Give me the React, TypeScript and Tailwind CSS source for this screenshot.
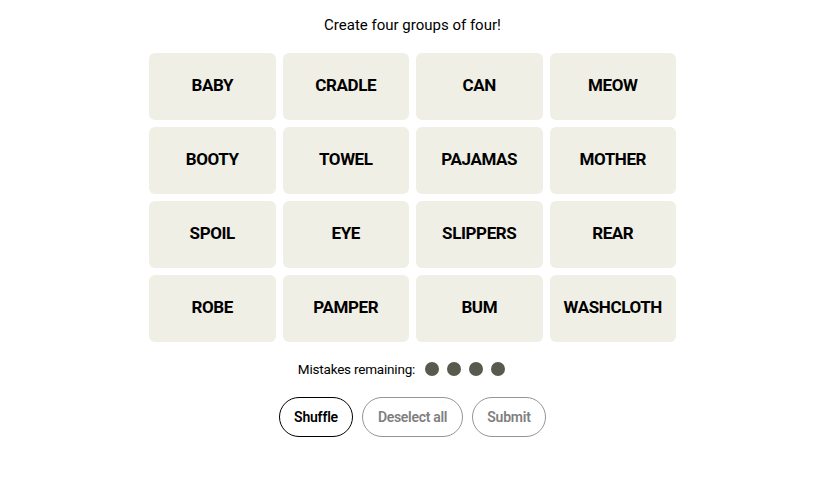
import React from "react";

const words = [
  "BABY", "CRADLE", "CAN", "MEOW",
  "BOOTY", "TOWEL", "PAJAMAS", "MOTHER",
  "SPOIL", "EYE", "SLIPPERS", "REAR",
  "ROBE", "PAMPER", "BUM", "WASHCLOTH",
];

const App = () => {
  return (
    <div className="w-[825px] h-[488px] bg-white flex flex-col items-center font-['Roboto','Liberation_Sans',Arial,sans-serif] text-black">
      <p className="mt-[15px] h-[20px] text-[15px] leading-[20px]">Create four groups of four!</p>

      <div className="mt-[18px] w-[527px] grid grid-cols-4 gap-x-[7px] gap-y-[7px]">
        {words.map((w) => (
          <div
            key={w}
            className="h-[67px] rounded-[6px] bg-[#efefe6] flex items-center justify-center text-[17px] font-bold tracking-[-0.4px] pb-[1px]"
          >
            {w}
          </div>
        ))}
      </div>

      <div className="mt-[19px] flex items-center h-[16px] mr-[22px]">
        <span className="text-[13.5px] leading-[16px] tracking-[-0.2px]">Mistakes remaining:</span>
        <div className="ml-[10px] flex gap-[8px]">
          {[0, 1, 2, 3].map((i) => (
            <span key={i} className="w-[14px] h-[14px] rounded-full bg-[#5a594e]" />
          ))}
        </div>
      </div>

      <div className="mt-[20px] flex gap-[9px]">
        <button className="w-[74px] h-[40px] rounded-full border border-black text-[14px] font-semibold tracking-[-0.2px]">
          Shuffle
        </button>
        <button className="w-[101px] h-[40px] rounded-full border border-[#959595] text-[#7f7f7f] text-[14px] font-semibold tracking-[-0.3px]">
          Deselect all
        </button>
        <button className="w-[74px] h-[40px] rounded-full border border-[#959595] text-[#7f7f7f] text-[14px] font-semibold tracking-[-0.2px]">
          Submit
        </button>
      </div>
    </div>
  );
};

export default App;
